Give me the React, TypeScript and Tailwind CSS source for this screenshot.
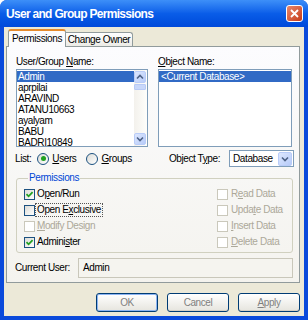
import React from "react";

const U = ({ children }: { children: React.ReactNode }) => (
  <span className="underline decoration-1 underline-offset-[1px]">{children}</span>
);

const Check = ({ checked = false, disabled = false }: { checked?: boolean; disabled?: boolean }) => (
  <div
    className={
      "w-[11px] h-[11px] shrink-0 border flex items-center justify-center " +
      (disabled
        ? "border-[#CAC8BB] bg-white"
        : "border-[#1C5180] bg-gradient-to-br from-[#DCDCD7] to-white")
    }
  >
    {checked && (
      <svg width="9" height="9" viewBox="0 0 9 9">
        <path d="M1.5 4.2 L3.6 6.3 L7.6 2.2" stroke="#21A121" strokeWidth="1.8" fill="none" />
      </svg>
    )}
  </div>
);

const Radio = ({ checked = false }: { checked?: boolean }) => (
  <div className="w-[12px] h-[12px] shrink-0 rounded-full border border-[#1C5180] bg-gradient-to-br from-[#DCDCD7] to-white flex items-center justify-center">
    {checked && <div className="w-[5px] h-[5px] rounded-full bg-[#21A121]" />}
  </div>
);

const Chevron = ({ up = false }: { up?: boolean }) => (
  <svg width="8" height="6" viewBox="0 0 8 6">
    <path
      d={up ? "M1 4.5 L4 1.5 L7 4.5" : "M1 1.5 L4 4.5 L7 1.5"}
      stroke="#4D6185"
      strokeWidth="1.6"
      fill="none"
    />
  </svg>
);

const ScrollBtn = ({ up = false }: { up?: boolean }) => (
  <div className="w-[12px] h-[12px] rounded-[2px] border border-[#B9CCF8] bg-gradient-to-br from-[#DDE7FE] to-[#B7CBF8] flex items-center justify-center">
    <Chevron up={up} />
  </div>
);

const users = ["Admin", "aprpilai", "ARAVIND", "ATANU10663", "ayalyam", "BABU", "BADRI10849"];

const Btn = ({ children, def = false }: { children: React.ReactNode; def?: boolean }) => (
  <div
    className={
      "w-[62px] h-[19px] rounded-[3px] border border-[#003C74] bg-gradient-to-b from-white to-[#E6E5DE] flex items-center justify-center text-[#808080] " +
      (def ? "shadow-[inset_0_0_0_1px_#8CB4F2]" : "shadow-[inset_0_-1px_0_0_#D6D0C5]")
    }
  >
    {children}
  </div>
);

export default function App() {
  return (
    <div className="w-[308px] h-[320px] flex flex-col bg-[#0A4ADB] rounded-t-[7px] overflow-hidden font-['Liberation_Sans',sans-serif] text-[10px] tracking-[-0.4px] text-black leading-[12px]">
      {/* Title bar */}
      <div className="h-[27px] shrink-0 flex items-center pl-[6px] pr-[5px] bg-gradient-to-b from-[#3D8FF8] via-[#0A5DE8] to-[#0049DA]">
        <div className="flex-1 text-white font-bold text-[12px] tracking-[-0.7px]">User and Group Permissions</div>
        <div className="w-[17px] h-[17px] rounded-[3px] border border-white bg-gradient-to-br from-[#E8866A] to-[#C5380F] flex items-center justify-center">
          <svg width="9" height="9" viewBox="0 0 9 9">
            <path d="M1 1 L8 8 M8 1 L1 8" stroke="white" strokeWidth="1.8" />
          </svg>
        </div>
      </div>

      {/* Body */}
      <div className="flex-1 mx-[4px] mb-[4px] bg-[#ECE9D8] flex flex-col">
        {/* Tabs */}
        <div className="h-[19px] flex items-end pl-[4px]">
          <div className="relative z-10 -mb-[1px] h-[18px] w-[58px] border-x border-t border-[#919B9C] border-t-[#E68B2C] border-t-2 rounded-t-[3px] bg-[#FCFCFE] flex items-center justify-center">
            Permissions
          </div>
          <div className="h-[14px] w-[67px] border-r border-t border-[#919B9C] rounded-tr-[3px] bg-gradient-to-b from-white to-[#ECEBE6] flex items-center justify-center mb-[0px]">
            Change Owner
          </div>
        </div>

        {/* Panel */}
        <div className="ml-[2px] mr-[4px] h-[237px] border border-[#919B9C] bg-gradient-to-b from-[#FCFCFE] to-[#F4F3EE] flex flex-col">
          {/* labels */}
          <div className="flex mt-[9px] pl-[9px] h-[12px]">
            <div className="w-[142px]">
              User/Group <U>N</U>ame:
            </div>
            <div>
              <U>O</U>bject Name:
            </div>
          </div>

          {/* lists */}
          <div className="flex mt-[1px] pl-[9px]">
            <div className="w-[132px] h-[78px] border border-[#7F9DB9] bg-white flex overflow-hidden">
              <div className="flex-1 flex flex-col pt-[1px]">
                {users.map((u, i) => (
                  <div
                    key={u}
                    className={
                      "h-[11px] leading-[11px] pl-[1px] shrink-0 " +
                      (i === 0 ? "bg-[#316AC5] text-white" : "")
                    }
                  >
                    {u}
                  </div>
                ))}
              </div>
              <div className="w-[13px] flex flex-col bg-gradient-to-r from-[#F3F1EC] to-[#FEFEFB] pt-[1px] pb-[1px] pr-[1px]">
                <ScrollBtn up />
                <div className="h-[6px] mt-[1px] rounded-[1px] bg-[#C8D7FA] border border-[#B8CAF6]" />
                <div className="flex-1" />
                <ScrollBtn />
              </div>
            </div>
            <div className="ml-[10px] w-[134px] h-[78px] border border-[#7F9DB9] bg-white pt-[1px]">
              <div className="h-[11px] leading-[11px] bg-[#316AC5] text-white pl-[2px]">&lt;Current Database&gt;</div>
            </div>
          </div>

          {/* List / Object type row */}
          <div className="flex items-center mt-[3px] h-[17px] pl-[8px]">
            <span>List:</span>
            <div className="ml-[6px]">
              <Radio checked />
            </div>
            <span className="ml-[3px]">
              <U>U</U>sers
            </span>
            <div className="ml-[10px]">
              <Radio />
            </div>
            <span className="ml-[3px]">
              <U>G</U>roups
            </span>
            <span className="ml-[37px]">
              Object T<U>y</U>pe:
            </span>
            <div className="ml-[9px] w-[65px] h-[17px] border border-[#7F9DB9] bg-white flex items-center pl-[3px] pr-[1px]">
              <span className="flex-1">Database</span>
              <div className="w-[14px] h-[14px] rounded-[2px] border border-[#B9CCF8] bg-gradient-to-br from-[#DDE7FE] to-[#B7CBF8] flex items-center justify-center">
                <Chevron />
              </div>
            </div>
          </div>

          {/* Permissions group */}
          <fieldset className="ml-[9px] mr-[6px] mt-[5px] h-[81px] border border-[#D0D0BF] rounded-[3px] px-[7px] pt-[2px]">
            <legend className="ml-[4px] px-[1px] text-[#0046D5]">Permissions</legend>
            <div className="flex">
              <div className="w-[193px] flex flex-col">
                <div className="h-[16px] flex items-center">
                  <Check checked />
                  <span className="ml-[2px]">
                    O<U>p</U>en/Run
                  </span>
                </div>
                <div className="h-[16px] flex items-center">
                  <Check />
                  <span className="ml-[1px] px-[1px] outline outline-1 outline-dotted outline-[#555]">
                    Open E<U>x</U>clusive
                  </span>
                </div>
                <div className="h-[16px] flex items-center text-[#ACA899]">
                  <Check disabled />
                  <span className="ml-[2px]">
                    <U>M</U>odify Design
                  </span>
                </div>
                <div className="h-[16px] flex items-center">
                  <Check checked />
                  <span className="ml-[2px]">
                    Admini<U>s</U>ter
                  </span>
                </div>
              </div>
              <div className="flex flex-col text-[#ACA899]">
                <div className="h-[16px] flex items-center">
                  <Check disabled />
                  <span className="ml-[3px]">
                    R<U>e</U>ad Data
                  </span>
                </div>
                <div className="h-[16px] flex items-center">
                  <Check disabled />
                  <span className="ml-[3px]">
                    Upda<U>t</U>e Data
                  </span>
                </div>
                <div className="h-[16px] flex items-center">
                  <Check disabled />
                  <span className="ml-[3px]">
                    <U>I</U>nsert Data
                  </span>
                </div>
                <div className="h-[16px] flex items-center">
                  <Check disabled />
                  <span className="ml-[3px]">
                    <U>D</U>elete Data
                  </span>
                </div>
              </div>
            </div>
          </fieldset>

          {/* Current user */}
          <div className="flex items-center mt-[5px] pl-[8px]">
            <span className="w-[63px]">Current User:</span>
            <div className="w-[215px] h-[20px] border border-[#C9C7BA] bg-[#F5F4EF] flex items-center pl-[4px]">
              Admin
            </div>
          </div>
        </div>

        {/* Buttons */}
        <div className="flex justify-end gap-[9px] pr-[4px] mt-[10px]">
          <Btn def>OK</Btn>
          <Btn>Cancel</Btn>
          <Btn>
            <U>A</U>pply
          </Btn>
        </div>
      </div>
    </div>
  );
}
